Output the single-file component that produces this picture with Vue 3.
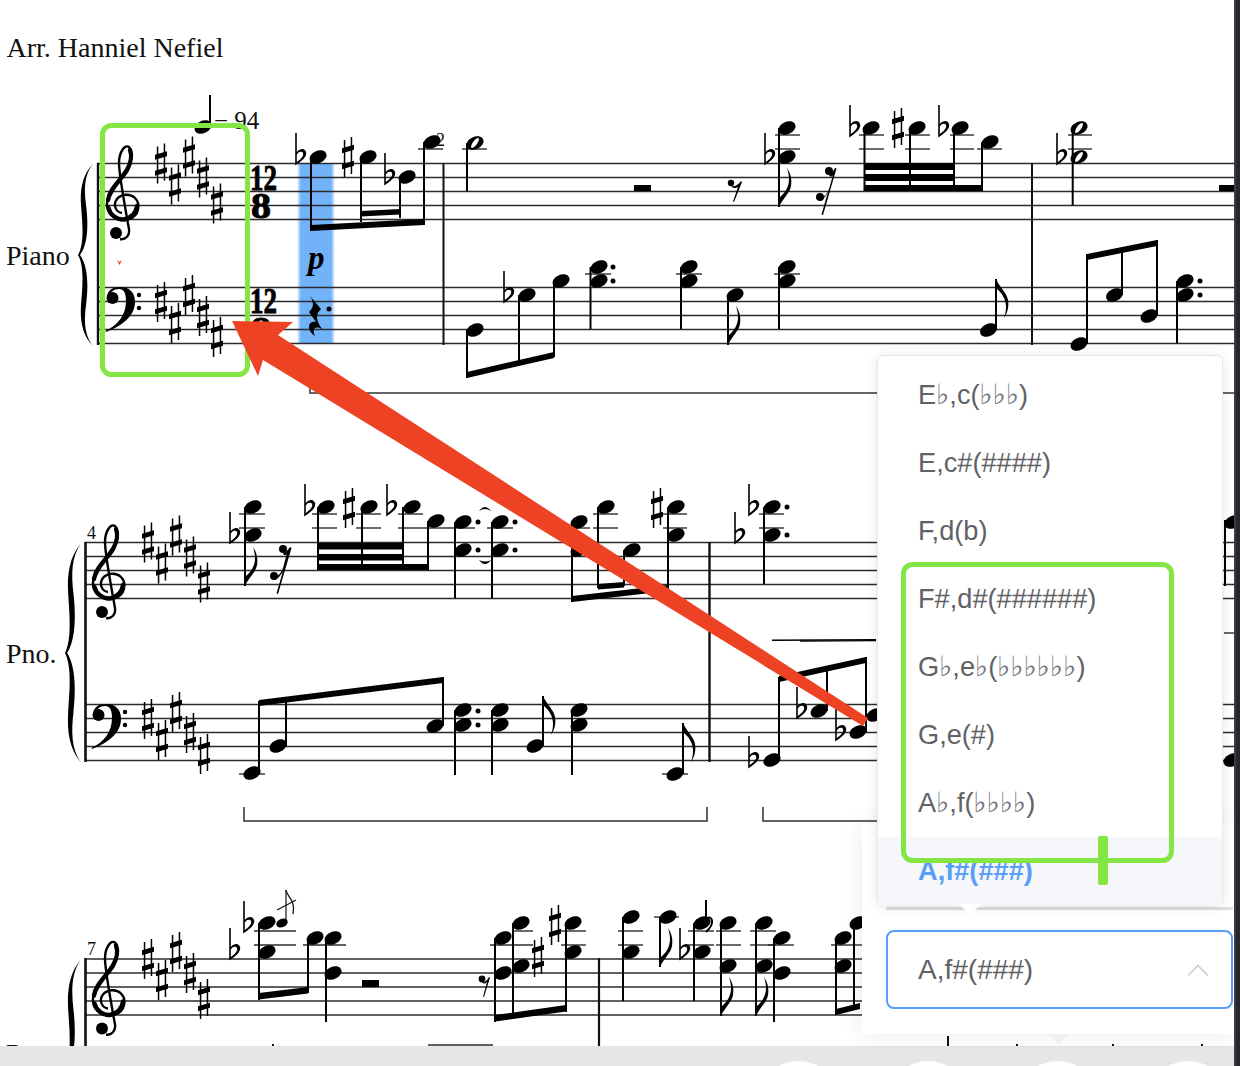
<script setup>
const staves = [
  { x: 97, y: 163.5 }, { x: 97, y: 287.5 },
  { x: 85, y: 542.5 }, { x: 85, y: 704.5 },
  { x: 85, y: 959 }
]
const staffLines = staves.flatMap(s => [0, 1, 2, 3, 4].map(i => ({ x: s.x, y: s.y + i * 14 })))

const barlines = [
  [98, 163, 345, 2.4], [443.5, 163, 345, 2], [1032, 163, 345, 2],
  [85.5, 542, 762, 2.6], [709.5, 542, 762, 2.4],
  [85.5, 958, 1046, 2.6], [599, 958, 1046, 2.2], [948, 1036, 1046, 2]
]

const heads = [
  [203, 127],
  [318, 157], [368, 157], [407, 177], [432, 142],
  [787, 128], [787, 157], [871, 128], [917, 128], [960, 128], [990, 142],
  [475, 330], [527, 295], [561, 281], [599, 267], [599, 281], [689, 267], [689, 281],
  [735, 295], [787, 267], [787, 281], [988.5, 330],
  [1079, 344], [1114.5, 295], [1149, 316], [1185, 281], [1185, 295],
  [253, 507], [253, 535], [326, 507], [369, 507], [412, 507], [436, 521],
  [463, 522], [463, 550], [500, 522], [500, 550], [579, 522], [579, 550], [606, 507], [632, 550],
  [676, 507], [676, 535], [772, 507], [772, 535],
  [252, 773], [278, 746], [435, 726], [463, 710], [463, 725], [500, 710], [500, 725],
  [535, 746], [579, 710], [579, 725], [675, 774], [772, 760], [819, 711], [858, 732],
  [267, 923], [267, 952], [315, 938], [333, 938], [333, 973],
  [503, 938], [503, 973], [521, 923], [521, 966], [573, 923], [573, 952],
  [631, 917], [631, 952], [668, 917], [702, 923], [702, 952],
  [728, 923], [728, 966], [764, 923], [764, 966], [782, 938], [782, 973],
  [843, 938], [843, 966], [858, 923],
  [1233, 522], [1232, 760], [875, 715]
]
const smallHeads = [[282, 923]]
const openHeads = [[475, 143], [1079, 128], [1079, 157]]

const stems = [
  [210, 95, 127], [311, 157, 231], [361, 157, 222], [400, 177, 218], [424, 142, 225],
  [467, 143, 191], [779, 128, 207], [864.5, 128, 191], [910, 128, 191], [954, 128, 191], [982, 142, 191],
  [1072.7, 128, 205],
  [467, 330, 378], [519, 295, 362], [554, 281, 357], [590.5, 267, 329], [681, 267, 329],
  [728, 295, 345], [779, 267, 329], [996, 330, 279], [1087, 344, 254], [1122, 295, 248], [1157, 316, 240],
  [1177, 281, 343],
  [245, 507, 586], [318, 507, 570], [362, 507, 570], [403, 507, 570], [428, 521, 570],
  [455, 522, 598], [492, 522, 598], [572, 522, 602], [598, 507, 588], [624, 550, 586], [668, 507, 590],
  [764, 507, 584],
  [259, 773, 701], [286, 746, 700], [443, 726, 677], [455, 710, 775], [492, 710, 775], [543, 746, 696],
  [572, 710, 775], [683, 774, 723], [779, 760, 677], [827, 711, 668], [866, 732, 657],
  [259, 923, 1000], [308, 938, 993], [326, 938, 1022], [495, 938, 1022], [513, 923, 1018], [566, 923, 1012],
  [623, 917, 1001], [660, 917, 967], [694, 923, 1001], [706, 900, 923], [721, 923, 1016], [756, 923, 1016],
  [774, 938, 1022], [836, 938, 1015], [854, 923, 1010],
  [1225, 520, 586]
]
const thinStems = [[286, 890, 923]]

const ledgers = [
  [418, 443, 149], [462, 487, 149], [775, 800, 135], [775, 800, 149], [859, 884, 135], [859, 884, 149],
  [905, 930, 135], [905, 930, 149], [950, 974, 135], [950, 974, 149], [977, 1002, 149],
  [1068, 1092, 135], [1068, 1092, 149],
  [585, 611, 274], [676, 702, 274], [774, 800, 274],
  [239, 265, 514], [239, 265, 528], [312, 337, 514], [312, 337, 528], [356, 381, 514], [356, 381, 528],
  [398, 423, 514], [398, 423, 528], [423, 450, 528],
  [450, 475, 528], [487, 513, 528], [568, 590, 528], [593, 618, 514], [593, 618, 528],
  [663, 687, 514], [663, 687, 528], [759, 784, 514], [759, 784, 528],
  [239, 265, 774], [662, 688, 774],
  [254, 296, 931], [254, 296, 945], [303, 346, 945],
  [490, 533, 945], [513, 533, 931], [561, 586, 931], [561, 586, 945],
  [618, 643, 931], [618, 643, 945], [654, 679, 917], [688, 714, 931], [688, 714, 945],
  [716, 741, 931], [716, 741, 945], [750, 776, 931], [750, 776, 945], [768, 794, 945], [831, 862, 945],
  [1224, 1234, 633], [428, 493, 1045]
]

// [x1, y1, x2, y2, thickness]
const beams = [
  [311, 225, 424, 219, 6], [361, 211, 400, 209, 5.5],
  [864.5, 163, 954, 163, 7], [864.5, 174, 954, 174, 7], [864.5, 185, 982, 185, 6],
  [467, 372, 554, 352, 6], [1087, 254, 1157, 240, 6],
  [318, 543, 403, 543, 6.5], [318, 554, 403, 554, 6.5], [318, 564, 428, 564, 6],
  [259, 700, 443, 677, 6],
  [572, 596, 668, 585, 6], [598, 584, 624, 582, 5.5],
  [779, 676, 866, 657, 6],
  [259, 993, 308, 987, 6.5],
  [495, 1015, 566, 1005, 6.5], [836, 1009, 860, 1003, 6],
  [772, 639.5, 876, 639, 1.4], [876, 640, 800, 640.5, 1.2]
]

const dots = [
  [329, 309], [613, 267], [613, 281], [1200, 281], [1200, 295],
  [478, 522], [478, 550], [515, 522], [515, 550], [787, 507], [787, 535],
  [478, 711], [478, 725]
]

const sharps = [
  [348, 157], [898, 128], [349, 508], [657, 508], [538, 957], [555, 925]
]
const keySigs = [
  { x: 161, y: 163.5, d: [0, 21, -7, 14, 40] },
  { x: 161, y: 287.5, d: [14.5, 35.5, 7.5, 28.5, 49.5] },
  { x: 148, y: 542.5, d: [0, 21, -7, 14, 40] },
  { x: 148, y: 704.5, d: [14.5, 35.5, 7.5, 28.5, 49.5] },
  { x: 148, y: 959, d: [0, 21, -7, 14, 40] }
]
const keySharps = keySigs.flatMap(k => k.d.map((d, i) => [k.x + i * 14, k.y + d]))

const flats = [
  [296, 157], [385, 177], [765, 157], [850, 129], [939, 129], [1057, 157], [504, 295],
  [230, 536], [305, 508], [387, 508], [735, 536], [749, 508],
  [749, 760], [797, 711], [836, 733],
  [230, 952], [244, 925], [680, 952]
]

const flagsDown = [[779, 207], [728, 345], [245, 586], [660, 967], [721, 1016], [756, 1016]]
const flagsUp = [[996, 279], [543, 696], [683, 723]]

const rests = [
  [634, 185, 17, 6], [1219, 185, 15, 6], [362, 980, 17, 7]
]

const clefTreble = [{ x: 0, y: 0 }, { x: -14, y: 379 }, { x: -14, y: 795.5 }]
const clefBass = [{ x: 0, y: 0 }, { x: -14, y: 417 }]

const timeSigs = [
  { n: '12', x: 250, y: 190, w: 27 }, { n: '8', x: 251, y: 218, w: 20 },
  { n: '12', x: 250, y: 313, w: 27 }, { n: '8', x: 251, y: 342, w: 20 }
]

const keys = ['E♭,c(♭♭♭)', 'E,c#(####)', 'F,d(b)', 'F#,d#(######)', 'G♭,e♭(♭♭♭♭♭♭)', 'G,e(#)', 'A♭,f(♭♭♭♭)', 'A,f#(###)']
const parts = k => k.split(/(♭)/).filter(Boolean)
const beamPoints = b => `${b[0]},${b[1]} ${b[2]},${b[3]} ${b[2]},${b[3] + b[4]} ${b[0]},${b[1] + b[4]}`
</script>

<template>
  <div class="screen">
    <div class="main">
      <div class="sheet">
        <svg class="score" width="1234" height="1046" viewBox="0 0 1234 1046">
          <defs>
            <linearGradient id="hl" x1="0" x2="1" y1="0" y2="0">
              <stop offset="0" stop-color="#72b2f8" stop-opacity="0" />
              <stop offset="0.1" stop-color="#72b2f8" />
              <stop offset="0.9" stop-color="#72b2f8" />
              <stop offset="1" stop-color="#72b2f8" stop-opacity="0" />
            </linearGradient>
            <g id="sharp">
              <rect x="-4.2" y="-17" width="1.5" height="37" />
              <rect x="2.7" y="-20" width="1.5" height="37" />
              <polygon points="-6,-8.75 6,-12.25 6,-7.25 -6,-3.75" />
              <polygon points="-6,7.25 6,3.75 6,8.75 -6,12.25" />
            </g>
            <path id="flat" d="M-.8,-24H.8V-5C3.5,-8 6,-8.5 8,-7.5C11.5,-5.5 10.5,-1 7.5,2C5,4.5 2,6.5 -.8,8.5ZM.8,-2.5V5C3.5,3 6,1 7,-1.5C7.8,-4 6.5,-5.5 4.5,-5.2C3,-5 1.8,-4 .8,-2.5Z" fill-rule="evenodd" />
            <path id="flag" d="M0,0L0,-9C6,-14 10,-20 10,-28C10,-32 9,-36 8,-39C12,-33 13,-27 12,-21C11,-14 4,-9 0,0Z" />
            <g id="treble">
              <path class="clef-line" d="M122,213C115,212 113,204 117,199C121,194 130,193 135,198C141,204 139,216 129,219C118,222 106,215 107,203C108,190 121,180 127,170C132,162 133,152 129,147C125,144 119,152 119,163C119,175 127,218 129,229C130,236 125,240 120,239" />
              <path class="clef-thick" d="M108,200C110,188 121,180 127,170C131,163 132,155 130,150" />
              <path class="clef-thick" d="M137,206C136,214 130,218 124,219.5C117,220 110,215 108.5,208" />
              <circle cx="116" cy="233" r="6" />
            </g>
            <g id="bass">
              <path d="M107,298C107,290 113,287 120,287C130,287 135,293 135,302C135,316 122,326 106,332L105.5,331C118,325 126,315 126,301C126,293 124,289 119,289C114,289 110,292 109,297Z" />
              <circle cx="112.5" cy="298" r="6" />
              <circle cx="139" cy="295" r="2.2" />
              <circle cx="139" cy="308" r="2.2" />
            </g>
            <path id="brace" d="M15,-91C4,-80 2,-65 3,-50C4,-35 7,-12 0,0C7,12 4,35 3,50C2,65 4,80 15,91C6,80 6,65 8,50C10,35 11,12 2,0C11,-12 10,-35 8,-50C6,-65 6,-80 15,-91Z" />
          </defs>

          <text class="serif" x="6.5" y="57">Arr. Hanniel Nefiel</text>
          <text class="serif" x="6" y="265">Piano</text>
          <text class="serif" x="6" y="663">Pno.</text>
          <text class="serif" x="6" y="1063">Pno.</text>
          <text class="tempo" x="214" y="129"><tspan dy="2.5">=</tspan><tspan dy="-2.5"> 94</tspan></text>
          <text class="measure" x="436" y="146">2</text>
          <text class="measure" x="87" y="539">4</text>
          <text class="measure" x="87" y="955">7</text>

          <rect x="297" y="163" width="38" height="180" fill="url(#hl)" />
          <text class="dyn" x="308" y="269">p</text>

          <line v-for="(l, i) in staffLines" :key="'s' + i" class="staff" :x1="l.x" :x2="1234" :y1="l.y" :y2="l.y" />
          <line v-for="(b, i) in barlines" :key="'b' + i" class="ink" :x1="b[0]" :x2="b[0]" :y1="b[1]" :y2="b[2]" :stroke-width="b[3]" />

          <use href="#brace" transform="translate(78,255)" />
          <use href="#brace" transform="translate(65,653) scale(1.05,1.2)" />
          <use href="#brace" transform="translate(65,1069) scale(1.05,1.2)" />

          <use v-for="(c, i) in clefTreble" :key="'t' + i" href="#treble" :x="c.x" :y="c.y" />
          <use v-for="(c, i) in clefBass" :key="'c' + i" href="#bass" :x="c.x" :y="c.y" />

          <use v-for="(s, i) in keySharps" :key="'k' + i" href="#sharp" :x="s[0]" :y="s[1]" />
          <use v-for="(s, i) in sharps" :key="'h' + i" href="#sharp" :x="s[0]" :y="s[1]" />
          <use v-for="(f, i) in flats" :key="'f' + i" href="#flat" :x="f[0]" :y="f[1]" />

          <text v-for="(t, i) in timeSigs" :key="'m' + i" class="time" :x="t.x" :y="t.y" :textLength="t.w" lengthAdjust="spacingAndGlyphs">{{ t.n }}</text>

          <line v-for="(l, i) in ledgers" :key="'l' + i" class="staff" :x1="l[0]" :x2="l[1]" :y1="l[2]" :y2="l[2]" />
          <line v-for="(s, i) in stems" :key="'st' + i" class="stem" :x1="s[0]" :x2="s[0]" :y1="s[1]" :y2="s[2]" />
          <line v-for="(s, i) in thinStems" :key="'th' + i" class="thin" :x1="s[0]" :x2="s[0]" :y1="s[1]" :y2="s[2]" />
          <polygon v-for="(b, i) in beams" :key="'bm' + i" :points="beamPoints(b)" />
          <ellipse v-for="(n, i) in heads" :key="'n' + i" :cx="n[0]" :cy="n[1]" rx="9" ry="6.2" :transform="`rotate(-25 ${n[0]} ${n[1]})`" />
          <ellipse v-for="(n, i) in smallHeads" :key="'sn' + i" :cx="n[0]" :cy="n[1]" rx="6" ry="4.2" :transform="`rotate(-25 ${n[0]} ${n[1]})`" />
          <g v-for="(n, i) in openHeads" :key="'o' + i" :transform="`rotate(-25 ${n[0]} ${n[1]})`">
            <ellipse :cx="n[0]" :cy="n[1]" rx="9" ry="6.2" />
            <ellipse class="hollow" :cx="n[0]" :cy="n[1]" rx="6" ry="2.2" :transform="`rotate(-30 ${n[0]} ${n[1]})`" />
          </g>
          <circle v-for="(d, i) in dots" :key="'d' + i" :cx="d[0]" :cy="d[1]" r="2.5" />
          <use v-for="(f, i) in flagsDown" :key="'fd' + i" href="#flag" :x="f[0]" :y="f[1]" />
          <use v-for="(f, i) in flagsUp" :key="'fu' + i" href="#flag" :transform="`translate(${f[0]},${f[1]}) scale(1,-1)`" />
          <rect v-for="(r, i) in rests" :key="'r' + i" :x="r[0]" :y="r[1]" :width="r[2]" :height="r[3]" />

          <!-- quarter and short rests -->
          <path d="M310,296L321,309C316,314 315,319 322,329C317,326 311,327 315,336C306,330 308,320 316,322L309,312C313,308 315,304 310,296Z" />
          <g>
            <circle cx="731" cy="183" r="3.2" />
            <path d="M731,186C735,187 738,185 741,181L742,182L734,202L733,201.5L738,187C736,188.5 733,188.5 731,186Z" />
            <circle cx="829" cy="171" r="4" />
            <circle cx="820" cy="197" r="4" />
            <path d="M829,175C831,175 833,172 835,168L836.5,168.5L823,215L821.5,214.5L828,192C826,196 823,200 820,201L822,198C825,196 827,194 829,189L833,175C832,177 830,177 829,175Z" />
            <circle cx="283" cy="549" r="4" />
            <circle cx="274" cy="576" r="4" />
            <path d="M283,553C285,553 287,551 290,547L291.5,548L278,594L276.5,593.5L283,571C281,575 278,579 274,580L276,577C279,575 281,573 283,568L287,553C286,556 284,556 283,553Z" />
            <circle cx="482" cy="979" r="3.4" />
            <path d="M482,982C484,983 487,981 489,977L490,977.5L484,997L483,996.7L487,982C485,984 483,984 482,982Z" />
          </g>

          <!-- turn marks and grace note -->
          <path d="M479,511Q485,503 491,511Q485,507 479,511Z" />
          <path d="M479,560Q485,568 491,560Q485,563 479,560Z" />
          <path class="thin-curve" d="M286,890C287,897 296,900 293,914" />
          <line class="thin" x1="277" y1="910" x2="296" y2="900" />
          <path class="open-line" d="M706,919C712,914 716,923 706,932" />

          <polyline class="bracket" points="310,383 310,393 1234,393" />
          <polyline class="bracket" points="244,807 244,821 707,821 707,807" />
          <polyline class="bracket" points="763,807 763,821 880,821" />
          <line class="ink" x1="1017" x2="1017" y1="1044" y2="1046" stroke-width="2" />
          <line class="ink" x1="1113" x2="1113" y1="1044" y2="1046" stroke-width="2" />
          <line class="ink" x1="1202" x2="1202" y1="1044" y2="1046" stroke-width="2" />
          <line class="ink" x1="273" x2="273" y1="1044" y2="1046" stroke-width="2" />
        </svg>
      </div>
      <div class="bottom-bar">
        <span v-for="n in 4" :key="n" class="round-btn"></span>
      </div>
    </div>
    <div class="edge"></div>

    <div class="key-popover">
      <div class="rule"></div>
      <div class="select">
        <span>A,f#(###)</span>
        <svg width="22" height="12" viewBox="0 0 22 12"><path d="M1,11.5L11,1.5L21,11.5" fill="none" stroke="#c8cbd2" stroke-width="1.5" /></svg>
      </div>
      <i class="popover-tip"></i>
    </div>

    <div class="dropdown">
      <ul class="options">
        <li v-for="(k, i) in keys" :key="k" :class="{ active: i === keys.length - 1 }">
          <template v-for="(p, j) in parts(k)" :key="j">
            <span v-if="p === '♭'" class="fl">♭</span>
            <template v-else>{{ p }}</template>
          </template>
        </li>
      </ul>
      <i class="dropdown-tip"></i>
    </div>

    <svg class="notes" width="1240" height="1066" viewBox="0 0 1240 1066">
      <rect class="mark" x="102.5" y="125.5" width="145" height="249" rx="9" />
      <polygon class="arrow" points="232,321 293,322 278,335 868,718 863,726 263,360 258,376" />
      <path class="tiny" d="M117,260L119.5,262L122,260L119.5,265Z" />
      <rect class="mark" x="903.5" y="564.5" width="268" height="296" rx="9" />
      <rect class="tick" x="1098" y="836" width="10" height="49" rx="2" />
    </svg>
  </div>
</template>

<style scoped>
.screen {
  position: relative;
  display: flex;
  width: 1240px;
  height: 1066px;
  overflow: hidden;
  background: #fff;
}
.main {
  display: flex;
  flex-direction: column;
  flex: 1;
  min-width: 0;
}
.sheet {
  flex: 1;
  min-height: 0;
  overflow: hidden;
}
.score {
  display: block;
  fill: #000;
}
.serif {
  font-family: "Liberation Serif", serif;
  font-size: 28px;
  fill: #111;
}
.tempo {
  font-family: "Liberation Serif", serif;
  font-size: 25px;
  fill: #111;
}
.measure {
  font-family: "Liberation Serif", serif;
  font-size: 18px;
  fill: #111;
}
.dyn {
  font-family: "Liberation Serif", serif;
  font-size: 33px;
  font-style: italic;
  font-weight: 700;
}
.time {
  font-family: "Liberation Serif", serif;
  font-size: 36px;
  font-weight: 700;
  stroke: #000;
  stroke-width: 0.9;
}
.staff {
  stroke: #2b2b2b;
  stroke-width: 1.4;
}
.ink {
  stroke: #111;
}
.stem {
  stroke: #000;
  stroke-width: 2;
}
.thin {
  stroke: #111;
  stroke-width: 1.2;
}
.thin-curve {
  fill: none;
  stroke: #111;
  stroke-width: 1.3;
}
.hollow {
  fill: #fff;
}
.clef-line {
  fill: none;
  stroke: #000;
  stroke-width: 2.4;
}
.clef-thick {
  fill: none;
  stroke: #000;
  stroke-width: 4.4;
  stroke-linecap: round;
}
.open-line {
  fill: none;
  stroke: #000;
  stroke-width: 2;
}
.bracket {
  fill: none;
  stroke: #333;
  stroke-width: 1.5;
}
.bottom-bar {
  display: flex;
  justify-content: flex-end;
  gap: 46px;
  flex: none;
  height: 20px;
  padding: 15px 4px 0 0;
  box-sizing: border-box;
  overflow: hidden;
  background: #e6e6e6;
}
.round-btn {
  flex: none;
  width: 84px;
  height: 84px;
  border-radius: 50%;
  background: #fff;
}
.edge {
  position: relative;
  z-index: 3;
  flex: none;
  width: 6px;
  box-sizing: border-box;
  border-left: 2px solid #3c3c42;
  background: #26262c;
}
.key-popover {
  position: absolute;
  left: 862px;
  top: 823px;
  width: 372px;
  height: 211px;
  box-sizing: border-box;
  padding: 84px 1px 0 24px;
  border-radius: 6px 0 0 6px;
  background: #fff;
  box-shadow: 0 0 24px rgba(40, 40, 70, 0.09);
  font-family: "Liberation Sans", "DejaVu Sans", sans-serif;
}
.rule {
  height: 3px;
  margin-bottom: 20px;
  background: #dedede;
}
.select {
  display: flex;
  align-items: center;
  justify-content: space-between;
  height: 79px;
  box-sizing: border-box;
  padding: 0 22px 0 30px;
  border: 2px solid #5a9ef8;
  border-radius: 8px;
  color: #606266;
  font-size: 28px;
}
.popover-tip {
  position: absolute;
  left: 187px;
  top: 100%;
  width: 0;
  height: 0;
  border-left: 10px solid transparent;
  border-right: 10px solid transparent;
  border-top: 11px solid #eff0f4;
}
.dropdown {
  position: absolute;
  left: 877px;
  top: 355px;
  width: 346px;
  height: 550px;
  box-sizing: border-box;
  border: 1.5px solid #e4e7ed;
  border-radius: 5px;
  background: #fff;
  box-shadow: 0 2px 12px rgba(0, 0, 0, 0.1);
  font-family: "Liberation Sans", "DejaVu Sans", sans-serif;
}
.options {
  margin: 0;
  padding: 5px 0 0;
  list-style: none;
}
.options li {
  height: 68px;
  padding-left: 40px;
  color: #606266;
  font-size: 27.2px;
  line-height: 68px;
  white-space: nowrap;
}
.options li.active {
  border-radius: 0 0 4px 4px;
  background: #f5f7fa;
  color: #5a9ef8;
  font-weight: 700;
}
.fl {
  display: inline-block;
  width: 13.2px;
  color: #74767c;
  font-size: 28px;
  font-weight: 400;
  line-height: 1;
  text-align: center;
}
.dropdown-tip {
  position: absolute;
  left: 81px;
  top: 100%;
  width: 0;
  height: 0;
  border-left: 11px solid transparent;
  border-right: 11px solid transparent;
  border-top: 11px solid #fff;
}
.notes {
  position: absolute;
  left: 0;
  top: 0;
  pointer-events: none;
}
.mark {
  fill: none;
  stroke: #83e645;
  stroke-width: 5;
}
.tick {
  fill: #83e645;
}
.arrow {
  fill: #ee4224;
}
.tiny {
  fill: #ee4224;
}
</style>
